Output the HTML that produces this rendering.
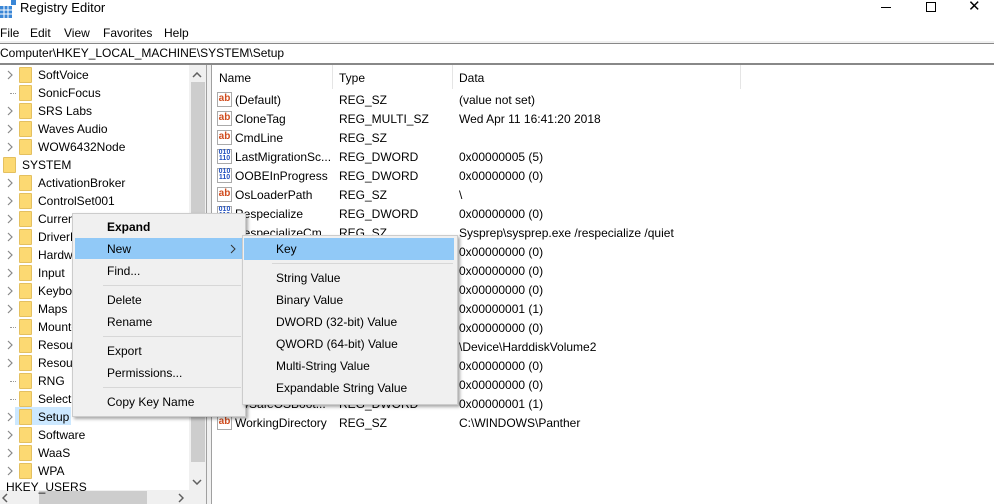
<!DOCTYPE html>
<html><head><style>
*{margin:0;padding:0;box-sizing:border-box}
body{width:994px;height:504px;overflow:hidden;background:#fff;font-family:"Liberation Sans",sans-serif;font-size:12px;color:#000;position:relative}
.a{position:absolute;white-space:nowrap}
.fold{position:absolute;width:13px;height:16px;background:#fcd972;border:1px solid #e4c060;border-radius:1px}
.arr{position:absolute;width:6px;height:10px}
.ico{position:absolute;width:15px;height:15px;border:1px solid #aaa;background:#fff;font-size:10px;font-weight:bold;line-height:12px;text-align:center}
.ab{color:#d04c1e}
.bin{color:#2050c0;font-size:7px;line-height:6px}
.menu{position:absolute;background:#f0f0f0;border:1px solid #ccc;box-shadow:2px 2px 3px rgba(0,0,0,.35)}
.hl{position:absolute;background:#91c9f7}
.sep{position:absolute;height:1px;background:#d7d7d7}
</style></head><body>
<svg class="a" style="left:0;top:0" width="16" height="18"><rect x="0" y="6" width="12" height="12" fill="#3a86d6"/><path d="M0 10h12M0 14h12M4 6v12M8 6v12" stroke="#fff"/><rect x="11" y="0" width="5" height="5" fill="#3a86d6"/></svg>
<div class="a" style="left:20px;top:0px;font-size:13px">Registry Editor</div>
<div class="a" style="left:881px;top:7px;width:10px;height:1px;background:#000"></div>
<div class="a" style="left:926px;top:2px;width:10px;height:10px;border:1px solid #000"></div>
<div class="a" style="left:968px;top:-3px;font-size:15px">✕</div>
<div class="a" style="left:0;top:26px">File</div>
<div class="a" style="left:30px;top:26px">Edit</div>
<div class="a" style="left:64px;top:26px">View</div>
<div class="a" style="left:103px;top:26px">Favorites</div>
<div class="a" style="left:164px;top:26px">Help</div>
<div class="a" style="left:0;top:41px;width:994px;height:2px;background:#f0f0f0"></div>
<div class="a" style="left:0;top:43px;width:994px;height:1px;background:#888"></div>
<div class="a" style="left:0;top:46px">Computer\HKEY_LOCAL_MACHINE\SYSTEM\Setup</div>
<div class="a" style="left:0;top:63px;width:994px;height:2px;background:#888"></div>
<div class="a" style="left:189px;top:65px;width:17px;height:425px;background:#f0f0f0"></div>
<div class="a" style="left:191px;top:82px;width:14px;height:380px;background:#cdcdcd"></div>
<svg class="a" style="left:192px;top:72px" width="10" height="6"><path d="M1 5L5 1L9 5" stroke="#606060" stroke-width="1.5" fill="none"/></svg>
<svg class="a" style="left:192px;top:479px" width="10" height="6"><path d="M1 1L5 5L9 1" stroke="#606060" stroke-width="1.5" fill="none"/></svg>
<div class="a" style="left:0;top:490px;width:206px;height:14px;background:#f0f0f0"></div>
<div class="a" style="left:39px;top:491px;width:108px;height:13px;background:#cdcdcd"></div>
<svg class="a" style="left:2px;top:493px" width="6" height="10"><path d="M5 1L1 5L5 9" stroke="#606060" stroke-width="1.5" fill="none"/></svg>
<svg class="a" style="left:178px;top:493px" width="6" height="10"><path d="M1 1L5 5L1 9" stroke="#606060" stroke-width="1.5" fill="none"/></svg>
<div class="a" style="left:206px;top:65px;width:6px;height:439px;background:#f0f0f0;border-left:1px solid #a0a0a0;border-right:1px solid #a0a0a0"></div>
<div class="a" style="left:15px;top:407px;width:56px;height:18px;background:#cce8ff"></div>
<div id="tree"></div>
<div class="a" style="left:219px;top:71px">Name</div>
<div class="a" style="left:332px;top:65px;width:1px;height:24px;background:#e5e5e5"></div>
<div class="a" style="left:339px;top:71px">Type</div>
<div class="a" style="left:452px;top:65px;width:1px;height:24px;background:#e5e5e5"></div>
<div class="a" style="left:459px;top:71px">Data</div>
<div class="a" style="left:740px;top:65px;width:1px;height:24px;background:#e5e5e5"></div>
<div id="list"></div>
<div class="menu" style="left:72px;top:213px;width:174px;height:204px"></div>
<div class="hl" style="left:75px;top:238px;width:167px;height:21px"></div>
<div class="a" style="left:107px;top:220px;font-weight:bold">Expand</div>
<div class="a" style="left:107px;top:242px">New</div>
<svg class="a" style="left:230px;top:244px" width="6" height="10"><path d="M1 1L5 5L1 9" stroke="#333" stroke-width="1" fill="none"/></svg>
<div class="a" style="left:107px;top:264px">Find...</div>
<div class="sep" style="left:103px;top:285px;width:138px"></div>
<div class="a" style="left:107px;top:293px">Delete</div>
<div class="a" style="left:107px;top:315px">Rename</div>
<div class="sep" style="left:103px;top:336px;width:138px"></div>
<div class="a" style="left:107px;top:344px">Export</div>
<div class="a" style="left:107px;top:366px">Permissions...</div>
<div class="sep" style="left:103px;top:387px;width:138px"></div>
<div class="a" style="left:107px;top:395px">Copy Key Name</div>
<div class="menu" style="left:242px;top:235px;width:216px;height:170px"></div>
<div class="hl" style="left:244px;top:238px;width:210px;height:22px"></div>
<div class="a" style="left:276px;top:242px">Key</div>
<div class="sep" style="left:272px;top:263px;width:181px"></div>
<div class="a" style="left:276px;top:271px">String Value</div>
<div class="a" style="left:276px;top:293px">Binary Value</div>
<div class="a" style="left:276px;top:315px">DWORD (32-bit) Value</div>
<div class="a" style="left:276px;top:337px">QWORD (64-bit) Value</div>
<div class="a" style="left:276px;top:359px">Multi-String Value</div>
<div class="a" style="left:276px;top:381px">Expandable String Value</div>
<script>
var t=[["SoftVoice",1],["SonicFocus",0],["SRS Labs",1],["Waves Audio",1],["WOW6432Node",1],["SYSTEM",2],["ActivationBroker",1],["ControlSet001",1],["CurrentControlSet",1],["DriverDatabase",1],["HardwareConfig",1],["Input",1],["Keyboard Layout",1],["Maps",1],["MountedDevices",0],["ResourceManager",1],["ResourcePolicyStore",1],["RNG",0],["Select",0],["Setup",1],["Software",1],["WaaS",1],["WPA",1]];
var h="";t.forEach(function(r,i){var y=66+i*18;
if(r[1]==2){h+='<div class="fold" style="left:3px;top:'+(y+1)+'px"></div><div class="a" style="left:22px;top:'+(y+2)+'px">'+r[0]+'</div>';}
else{if(r[1])h+='<svg class="arr" style="left:7px;top:'+(y+4)+'px" width="6" height="10"><path d="M1 1L5 5L1 9" stroke="#888" stroke-width="1.2" fill="none"/></svg>';else h+='<div class="a" style="left:10px;top:'+(y+9)+'px;width:6px;border-top:1px dotted #999"></div>';
h+='<div class="fold" style="left:19px;top:'+(y+1)+'px"></div><div class="a" style="left:38px;top:'+(y+2)+'px">'+r[0]+'</div>';}});
h+='<div class="a" style="left:6px;top:480px">HKEY_USERS</div>';
document.getElementById("tree").innerHTML=h;
var L=[["a","(Default)","REG_SZ","(value not set)"],["a","CloneTag","REG_MULTI_SZ","Wed Apr 11 16:41:20 2018"],["a","CmdLine","REG_SZ",""],["b","LastMigrationSc...","REG_DWORD","0x00000005 (5)"],["b","OOBEInProgress","REG_DWORD","0x00000000 (0)"],["a","OsLoaderPath","REG_SZ","\\"],["b","Respecialize","REG_DWORD","0x00000000 (0)"],["a","RespecializeCm...","REG_SZ","Sysprep\\sysprep.exe /respecialize /quiet"],["b","","","0x00000000 (0)"],["b","","","0x00000000 (0)"],["b","","","0x00000000 (0)"],["b","","","0x00000001 (1)"],["b","","","0x00000000 (0)"],["a","","","\\Device\\HarddiskVolume2"],["b","","","0x00000000 (0)"],["b","","","0x00000000 (0)"],["b","SvSafeOSBoot...","REG_DWORD","0x00000001 (1)"],["a","WorkingDirectory","REG_SZ","C:\\WINDOWS\\Panther"]];
h="";L.forEach(function(r,i){var y=91+i*19;
h+='<div class="ico '+(r[0]=="a"?"ab":"bin")+'" style="left:217px;top:'+(y+1)+'px">'+(r[0]=="a"?"ab":"010<br>110")+'</div>';
h+='<div class="a" style="left:235px;top:'+(y+2)+'px">'+r[1]+'</div><div class="a" style="left:339px;top:'+(y+2)+'px">'+r[2]+'</div><div class="a" style="left:459px;top:'+(y+2)+'px">'+r[3]+'</div>';});
document.getElementById("list").innerHTML=h;
</script>
</body></html>
